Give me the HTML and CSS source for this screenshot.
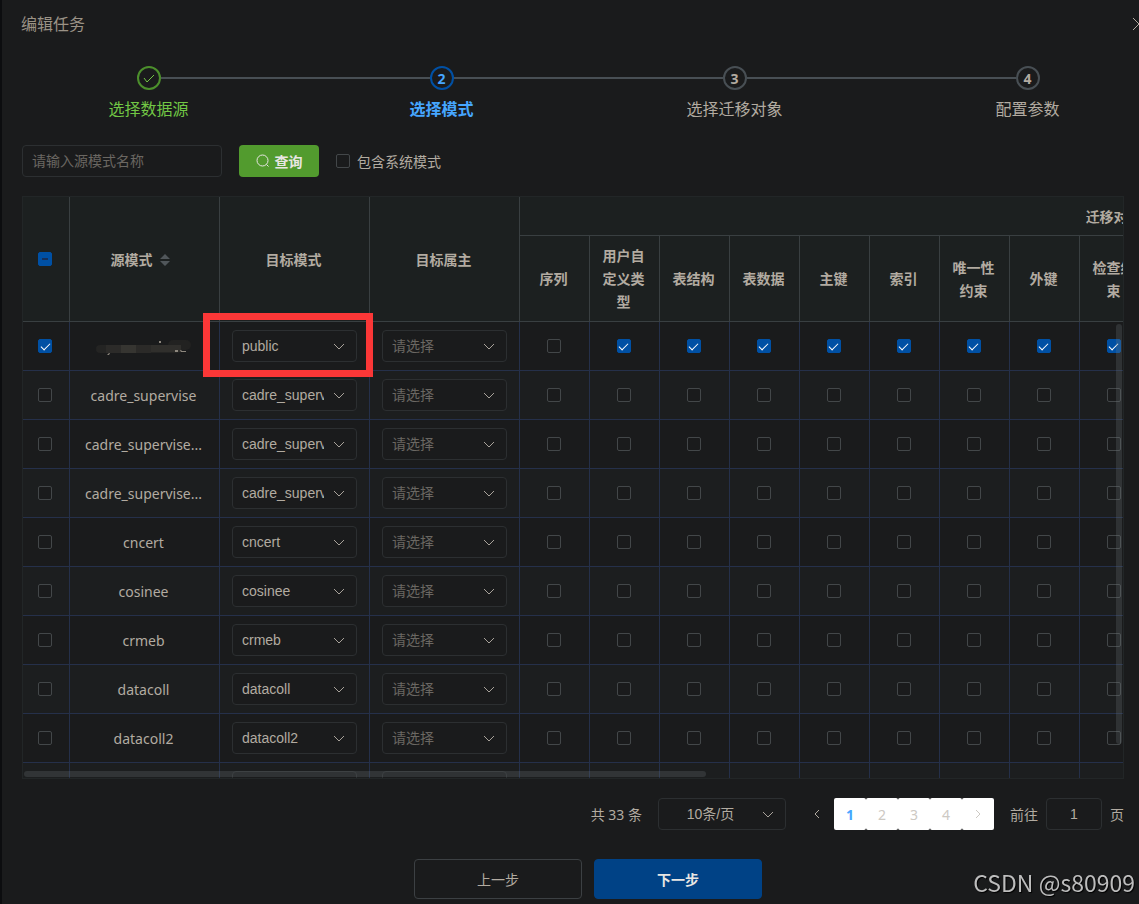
FILE: index.html
```html
<!DOCTYPE html>
<html lang="zh-CN">
<head>
    <meta charset="UTF-8">
    <meta name="viewport" content="width=device-width, initial-scale=1.0">
    <title>编辑任务</title>
    <link rel="stylesheet" href="styles.css">
</head>
<body>
    <svg class="sprite" aria-hidden="true">
        <symbol id="icon-down" viewBox="0 0 14 14"><path d="M2 5l5 5 5-5"/></symbol>
        <symbol id="icon-left" viewBox="0 0 14 14"><path d="M8 3L4 7l4 4"/></symbol>
        <symbol id="icon-right" viewBox="0 0 14 14"><path d="M5 3l4 4-4 4"/></symbol>
    </svg>

    <main class="drawer">
        <header class="drawer-header">
            <h1>编辑任务</h1>
            <button class="close" aria-label="关闭"><svg viewBox="0 0 14 14"><path d="M1 1l12 12M13 1L1 13"/></svg></button>
        </header>

        <ol class="steps">
            <li class="step done">
                <span class="step-icon"><svg viewBox="0 0 14 14"><path d="M2 7l3 4 7-7"/></svg></span>
                <span class="step-title">选择数据源</span>
            </li>
            <li class="step active">
                <span class="step-icon">2</span>
                <span class="step-title">选择模式</span>
            </li>
            <li class="step">
                <span class="step-icon">3</span>
                <span class="step-title">选择迁移对象</span>
            </li>
            <li class="step">
                <span class="step-icon">4</span>
                <span class="step-title">配置参数</span>
            </li>
        </ol>

        <div class="content">
            <form class="toolbar">
                <input type="text" class="input search" placeholder="请输入源模式名称" aria-label="源模式名称">
                <button type="button" class="btn-query">
                    <svg viewBox="0 0 14 14"><circle cx="6.5" cy="6.5" r="5.5"/><path d="M10.500 10.500L12.500 12.500"/></svg>
                    查询
                </button>
                <label class="system"><input type="checkbox">包含系统模式</label>
            </form>

            <div class="table-wrap">
                <div class="table-view">
                    <table>
                        <colgroup>
                            <col class="col-check">
                            <col class="col-name" span="3">
                            <col class="col-item" span="17">
                        </colgroup>
                        <thead>
                            <tr class="head-top">
                                <th rowspan="2"><input type="checkbox" class="partial" aria-label="全选"></th>
                                <th rowspan="2">源模式<svg class="sort" viewBox="0 0 10 12"><path d="M5 0l5 5H0zM5 12l5-5H0z"/></svg></th>
                                <th rowspan="2">目标模式</th>
                                <th rowspan="2">目标属主</th>
                                <th colspan="17">迁移对象</th>
                            </tr>
                            <tr class="head-items">
                                <th>序列</th>
                                <th>用户自定义类型</th>
                                <th>表结构</th>
                                <th>表数据</th>
                                <th>主键</th>
                                <th>索引</th>
                                <th>唯一性约束</th>
                                <th>外键</th>
                                <th>检查约束</th>
                                <th colspan="8"></th>
                            </tr>
                        </thead>
                        <tbody id="rows"></tbody>
                    </table>
                </div>
                <div class="bar bar-y"></div>
                <div class="bar bar-x"></div>
                <div class="highlight"></div>
            </div>

            <nav class="pagination" aria-label="分页">
                <span class="total">共 33 条</span>
                <span class="select size">
                    <select aria-label="每页条数"><option>10条/页</option></select>
                    <svg><use href="#icon-down"/></svg>
                </span>
                <button class="prev" aria-label="上一页"><svg><use href="#icon-left"/></svg></button>
                <div class="pager">
                    <button class="current">1</button>
                    <button>2</button>
                    <button>3</button>
                    <button>4</button>
                    <button aria-label="下一页"><svg><use href="#icon-right"/></svg></button>
                </div>
                <label class="jump">前往 <input type="text" class="input" value="1"> 页</label>
            </nav>
        </div>

        <footer class="actions">
            <button class="btn">上一步</button>
            <button class="btn primary">下一步</button>
        </footer>
    </main>

    <div class="watermark">CSDN @s80909</div>

    <script src="script.js"></script>
</body>
</html>
```
FILE: styles.css
```css
* {
    box-sizing: border-box;
}

body {
    margin: 0;
    min-height: 100vh;
    overflow: hidden;
    background-color: #0c0d0f;
    color: #b2aba1;
    font-family: "Noto Sans", "Noto Sans CJK SC", sans-serif;
    font-size: 14px;
    line-height: 23px;
}

button,
input,
select {
    margin: 0;
    font-family: "Liberation Sans", "Noto Sans CJK SC", sans-serif;
    font-size: 14px;
    color: inherit;
}

button {
    padding: 0;
    border: 0;
    background: none;
    cursor: pointer;
}

svg {
    width: 14px;
    height: 14px;
    fill: none;
    stroke: currentColor;
}

.sprite {
    display: none;
}

/* the drawer is wider than the window and runs out on the right */
.drawer {
    margin: 0 -35px 0 2px;
    min-height: 100vh;
    background-color: #1a1b1c;
}

.drawer-header {
    display: flex;
    justify-content: space-between;
    align-items: center;
    padding: 12px 28px 0 19px;
}

.drawer-header h1 {
    margin: 0;
    font-size: 16px;
    font-weight: 400;
    line-height: 24px;
    color: #9a9286;
}

.close {
    display: flex;
}

/* steps */
.steps {
    display: flex;
    margin: 30px 0 0;
    padding: 0;
    list-style: none;
}

.step {
    flex: 1;
    position: relative;
    display: flex;
    flex-direction: column;
    align-items: center;
    gap: 7px;
}

.step:not(:last-child)::after {
    content: "";
    position: absolute;
    top: 11px;
    left: calc(50% + 12px);
    width: calc(100% - 24px);
    height: 2px;
    background-color: #484f54;
}

.step-icon {
    display: flex;
    justify-content: center;
    align-items: center;
    width: 24px;
    height: 24px;
    border: 2px solid #484f54;
    border-radius: 50%;
    font-weight: 700;
}

.step-title {
    font-size: 16px;
    line-height: 24px;
}

.done {
    color: #72c745;
}

.done .step-icon {
    border-color: #4c8f2c;
}

.active {
    color: #46a6ff;
}

.active .step-icon {
    border-color: #0050a4;
}

.active .step-title {
    font-weight: 700;
}

/* search form */
.content {
    padding: 24px 50px 0 20px;
}

.toolbar {
    display: flex;
    align-items: center;
}

.input {
    height: 32px;
    padding: 0 9px;
    border: 1px solid #2c2f31;
    border-radius: 4px;
    background-color: #1a1b1c;
    outline: none;
}

.input::placeholder {
    color: #6a6762;
}

.search {
    width: 200px;
}

.btn-query {
    display: flex;
    justify-content: center;
    align-items: center;
    gap: 5px;
    width: 80px;
    height: 32px;
    margin: 0 17px;
    border-radius: 4px;
    background-color: #529b2e;
    color: #e8e6e3;
    font-weight: 700;
}

.system {
    display: flex;
    align-items: center;
    gap: 7px;
}

/* checkboxes */
input[type="checkbox"] {
    display: flex;
    justify-content: center;
    width: 14px;
    height: 14px;
    border: 1px solid #434749;
    border-radius: 2px;
    background-color: #1a1b1c;
    appearance: none;
}

th input[type="checkbox"],
td input[type="checkbox"] {
    margin: 0 auto;
}

input[type="checkbox"]:checked,
input[type="checkbox"].partial {
    border-color: #0050a4;
    background-color: #0050a4;
}

input[type="checkbox"]:checked::after {
    content: "";
    width: 4px;
    height: 8px;
    margin-top: 1px;
    border: solid #ffffff;
    border-width: 0 1px 1px 0;
    transform: rotate(45deg);
}

.partial::after {
    content: "";
    width: 6px;
    height: 2px;
    margin-top: 5px;
    background-color: #16305a;
}

/* table */
.table-wrap {
    position: relative;
    margin-top: 19px;
    border: 1px solid #222627;
}

.table-view {
    height: 581px;
    overflow: hidden;
}

table {
    width: 1687px;
    table-layout: fixed;
    border-collapse: separate;
    border-spacing: 0;
}

.col-check {
    width: 47px;
}

.col-name {
    width: 150px;
}

.col-item {
    width: 70px;
}

th,
td {
    padding: 0 13px 0 11px;
    text-align: center;
}

th {
    border: solid #393f41;
    border-width: 0 1px 1px 0;
    background-color: #1c2020;
    font-weight: 700;
}

td {
    height: 49px;
    border: solid #25304a;
    border-width: 0 1px 1px 0;
    line-height: 20px;
    white-space: nowrap;
}

tbody tr:nth-child(even) {
    background-color: #1c1e1f;
}

.head-top {
    height: 39px;
}

.head-items {
    height: 86px;
}

th .sort {
    width: 10px;
    height: 12px;
    margin: 0 7px;
    fill: #50565a;
    stroke: none;
    vertical-align: -1px;
}

td.name {
    padding-top: 2px;
}

td.choice {
    padding: 0 12px;
}

.mosaic {
    display: block;
    width: 96px;
    height: 18px;
    margin: 0 auto;
    stroke: none;
}

/* drop-downs */
.select {
    position: relative;
    display: block;
}

.select select {
    display: block;
    width: 100%;
    height: 32px;
    padding: 0 32px 0 9px;
    border: 1px solid #2c2f31;
    border-radius: 4px;
    background-color: #1a1b1c;
    appearance: none;
}

.select select.empty {
    color: #6a6762;
}

.select svg {
    position: absolute;
    top: 9px;
    right: 11px;
    color: #a8a29a;
    pointer-events: none;
}

/* scrollbars */
.bar {
    position: absolute;
    border-radius: 4px;
    background-color: rgba(110, 120, 125, 0.25);
}

.bar-y {
    top: 127px;
    right: 1px;
    width: 6px;
    height: 420px;
}

.bar-x {
    bottom: 1px;
    left: 1px;
    width: 62%;
    height: 6px;
}

.highlight {
    position: absolute;
    top: 116px;
    left: 180px;
    width: 170px;
    height: 64px;
    border: 7px solid #fb3737;
    pointer-events: none;
}

/* pagination */
.pagination {
    display: flex;
    justify-content: flex-end;
    align-items: center;
    margin-top: 19px;
}

.size {
    width: 128px;
    margin: 0 16px;
}

.size select {
    text-align-last: center;
}

.prev,
.pager button {
    display: flex;
    justify-content: center;
    align-items: center;
    width: 32px;
    height: 32px;
}

.pager {
    display: flex;
    margin-right: 16px;
}

.pager button {
    border-radius: 2px;
    background-color: #ffffff;
    color: #cdc9c3;
    font-family: "Noto Sans", sans-serif;
}

.pager .current {
    color: #46a6ff;
    font-weight: 700;
}

.jump {
    display: flex;
    align-items: center;
    gap: 8px;
}

.jump .input {
    width: 56px;
    text-align: center;
}

/* bottom buttons */
.actions {
    display: flex;
    justify-content: center;
    gap: 12px;
    margin-top: 29px;
}

.btn {
    width: 168px;
    height: 40px;
    border: 1px solid #3c4043;
    border-radius: 4px;
}

.primary {
    border-color: #004286;
    background-color: #004286;
    color: #e8e6e3;
    font-weight: 700;
}

.watermark {
    position: fixed;
    right: 4px;
    bottom: 6px;
    color: #bdbdbd;
    font-family: "Noto Sans CJK SC", sans-serif;
    font-size: 23px;
    line-height: 32px;
    text-shadow: 1px 1px 1px #000000;
}
```
FILE: script.js
```js
const ITEM_COUNT = 17;

const schemas = [
    { name: "", target: "public", checked: true },
    { name: "cadre_supervise", target: "cadre_supervise" },
    { name: "cadre_supervise...", target: "cadre_supervise" },
    { name: "cadre_supervise...", target: "cadre_supervise" },
    { name: "cncert", target: "cncert" },
    { name: "cosinee", target: "cosinee" },
    { name: "crmeb", target: "crmeb" },
    { name: "datacoll", target: "datacoll" },
    { name: "datacoll2", target: "datacoll2" },
    { name: "", target: "" }
];

// hidden schema name
const MOSAIC = `<svg class="mosaic" viewBox="0 0 96 18">
    <rect x="0" y="7" width="85" height="8" rx="4" fill="#242423"/>
    <rect x="72" y="2" width="23" height="10" rx="5" fill="#222221"/>
    <rect x="10" y="7" width="15" height="8" fill="#2c2b29"/>
    <rect x="25" y="7" width="15" height="8" fill="#363531"/>
    <rect x="40" y="7" width="15" height="8" fill="#2b2a28"/>
    <rect x="55" y="7" width="30" height="7" fill="#302f2c"/>
    <path d="M11 17h2l1-2h-1M63 3h2v2h-2zM79 12h3v2h-3zM84 12h1l1 1h4v1h-5z" fill="#8d877e"/>
</svg>`;

function select(text, label, empty) {
    return `<span class="select">
        <select aria-label="${label}" class="${empty ? "empty" : ""}"><option>${text}</option></select>
        <svg><use href="#icon-down"/></svg>
    </span>`;
}

function row(schema) {
    let cells = "";
    for (let i = 0; i < ITEM_COUNT; i++) {
        // the first column (sequence) is off by default
        const on = schema.checked && i > 0 ? "checked" : "";
        cells += `<td><input type="checkbox" aria-label="迁移对象" ${on}></td>`;
    }
    return `<tr>
        <td><input type="checkbox" aria-label="选择" ${schema.checked ? "checked" : ""}></td>
        <td class="name">${schema.name || (schema.checked ? MOSAIC : "")}</td>
        <td class="choice">${select(schema.target, "目标模式")}</td>
        <td class="choice">${select("请选择", "目标属主", true)}</td>
        ${cells}
    </tr>`;
}

document.getElementById("rows").innerHTML = schemas.map(row).join("");
```
